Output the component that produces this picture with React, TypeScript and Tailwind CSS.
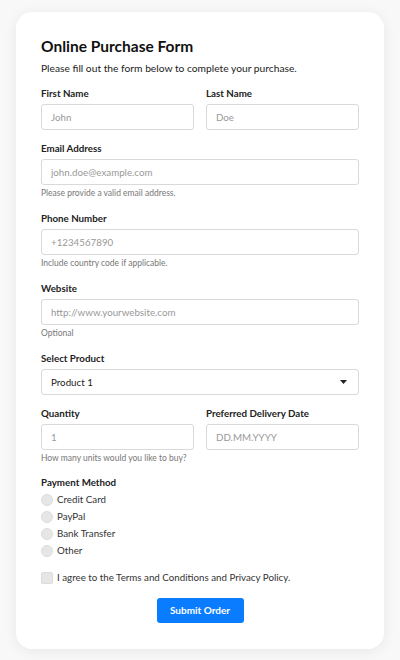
import React from 'react';

const font = { fontFamily: 'Lato, "Noto Sans", sans-serif' };

function Field({
  label,
  placeholder,
  help,
}: {
  label: string;
  placeholder: string;
  help?: string;
}) {
  return (
    <div className="flex flex-col">
      <label className="mb-[3px] text-[9.75px] font-bold leading-4 text-[#222]">{label}</label>
      <input
        className="h-[26px] w-full rounded-[3px] border border-[#d9d9d9] bg-white px-[9px] text-[9.75px] text-[#333] placeholder:text-[#999] outline-none"
        placeholder={placeholder}
      />
      {help && <p className="mt-[2px] text-[8.5px] leading-[13px] text-[#777]">{help}</p>}
    </div>
  );
}

export default function App() {
  const methods = ['Credit Card', 'PayPal', 'Bank Transfer', 'Other'];

  return (
    <div className="min-h-[660px] bg-[#f8f8f8] px-4 pt-3 pb-3" style={font}>
      <div className="rounded-2xl bg-white px-[25px] pt-[22px] pb-[26px] shadow-[0_2px_14px_rgba(0,0,0,0.07)]">
        <h1 className="text-[15.5px] font-bold leading-6 text-[#111]">Online Purchase Form</h1>
        <p className="mt-[1px] text-[10.25px] leading-[18px] text-[#222]">
          Please fill out the form below to complete your purchase.
        </p>

        <div className="mt-[8px] flex flex-col gap-[10px]">
          <div className="grid grid-cols-2 gap-3">
            <Field label="First Name" placeholder="John" />
            <Field label="Last Name" placeholder="Doe" />
          </div>
          <Field label="Email Address" placeholder="john.doe@example.com" help="Please provide a valid email address." />
          <Field label="Phone Number" placeholder="+1234567890" help="Include country code if applicable." />
          <Field label="Website" placeholder="http://www.yourwebsite.com" help="Optional" />

          <div className="flex flex-col">
            <label className="mb-[3px] text-[9.75px] font-bold leading-4 text-[#222]">Select Product</label>
            <div className="flex h-[26px] items-center justify-between rounded-[3px] border border-[#d9d9d9] bg-white pl-[9px] pr-[11px]">
              <span className="text-[9.75px] text-[#222]">Product 1</span>
              <svg width="7" height="4" viewBox="0 0 7 4">
                <path d="M0 0h7L3.5 4z" fill="#222" />
              </svg>
            </div>
          </div>

          <div className="flex flex-col">
            <div className="grid grid-cols-2 gap-3">
              <Field label="Quantity" placeholder="1" />
              <Field label="Preferred Delivery Date" placeholder="DD.MM.YYYY" />
            </div>
            <p className="mt-[2px] text-[8.5px] leading-[13px] text-[#777]">How many units would you like to buy?</p>
          </div>

          <div className="-mt-[1px] flex flex-col">
            <span className="mb-[1px] text-[9.75px] font-bold leading-4 text-[#222]">Payment Method</span>
            {methods.map((m) => (
              <label key={m} className="flex h-[17px] items-center gap-[4px]">
                <span className="h-3 w-3 rounded-full border border-[#dcdcdc] bg-[#e6e6e6]" />
                <span className="text-[9.75px] text-[#333]">{m}</span>
              </label>
            ))}
          </div>
        </div>

        <label className="mt-[10px] flex h-[17px] items-center gap-[4px]">
          <span className="h-3 w-3 rounded-[2px] border border-[#dcdcdc] bg-[#e6e6e6]" />
          <span className="text-[9.75px] text-[#333]">I agree to the Terms and Conditions and Privacy Policy.</span>
        </label>

        <div className="mt-[12px] flex justify-center">
          <button className="h-[25px] w-[87px] rounded-[3px] bg-[#0a7cff] text-[10px] font-bold text-white">
            Submit Order
          </button>
        </div>
      </div>
    </div>
  );
}
